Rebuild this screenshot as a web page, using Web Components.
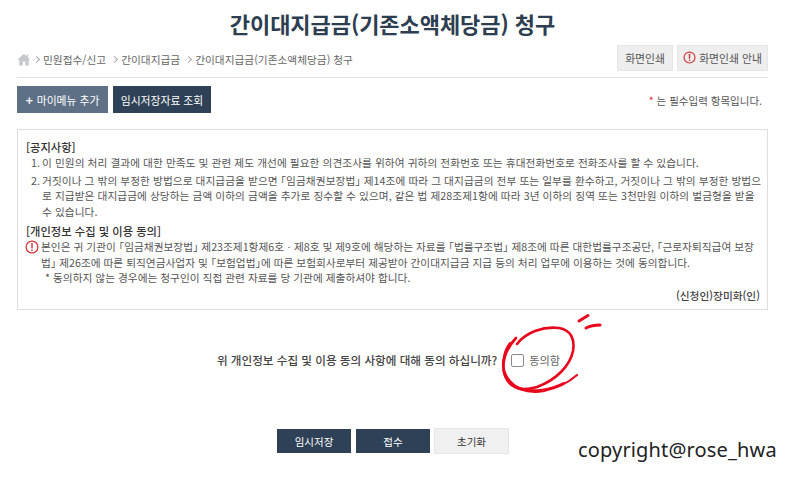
<!DOCTYPE html>
<html lang="ko">
<head>
<meta charset="utf-8">
<title>간이대지급금 청구</title>
<style>
  html, body { margin: 0; padding: 0; background: #fff; }
  body { width: 800px; height: 480px; overflow: hidden; position: relative; font-family: "Noto Sans CJK KR", "Noto Sans", sans-serif; color: #444; }
</style>
</head>
<body>
<claim-page>
  <page-title>간이대지급금(기존소액체당금) 청구</page-title>
  <page-location></page-location>
  <page-toolbar></page-toolbar>
  <notice-box></notice-box>
  <consent-row></consent-row>
  <form-actions></form-actions>
</claim-page>
<red-scribble></red-scribble>
<copy-mark>copyright@rose_hwa</copy-mark>

<script>
const alertIcon = (size) => `<svg width="${size}" height="${size}" viewBox="0 0 14 14" style="flex:none;display:block">
  <circle cx="7" cy="7" r="5.9" fill="none" stroke="#d13a3a" stroke-width="1.3"/>
  <path d="M7 3.6V7.8" stroke="#d13a3a" stroke-width="1.5" stroke-linecap="round"/>
  <circle cx="7" cy="10" r=".85" fill="#d13a3a"/>
</svg>`;

// brackets in the CJK font are full width, the reference has them narrow
const law = (name) => `<i>「</i>${name}<i>」</i>`;

class ClaimPage extends HTMLElement {
  constructor() {
    super();
    this.attachShadow({ mode: "open" });
    this.shadowRoot.innerHTML = `
      <style>
        :host { display: flex; flex-direction: column; width: 751px; margin-left: 17px; }
      </style>
      <slot></slot>`;
  }
}
customElements.define("claim-page", ClaimPage);

class PageTitle extends HTMLElement {
  constructor() {
    super();
    this.attachShadow({ mode: "open" });
    this.shadowRoot.innerHTML = `
      <style>
        :host { display: block; height: 43px; padding-top: 7px; box-sizing: border-box; text-align: center;
          font-size: 22px; font-weight: 700; line-height: 32px; color: #2c3e50; letter-spacing: -.05px; white-space: nowrap; }
      </style>
      <slot></slot>`;
  }
}
customElements.define("page-title", PageTitle);

class PageLocation extends HTMLElement {
  constructor() {
    super();
    this.attachShadow({ mode: "open" });
    this.shadowRoot.innerHTML = `
      <style>
        :host { display: flex; align-items: center; justify-content: space-between; height: 35px; box-sizing: border-box;
          border-bottom: 1px solid #e2e2e2; padding-bottom: 5px; }
        .crumbs { display: flex; align-items: center; font-size: 10.7px; color: #666; white-space: nowrap; padding-top: 3px; }
        .sep { width: 4px; height: 4px; border-top: 1px solid #aaa; border-right: 1px solid #aaa; transform: rotate(45deg); margin: 0 4px 0 6px; }
        .btns { display: flex; gap: 4px; }
        button { all: unset; display: flex; align-items: center; justify-content: center; gap: 3px; height: 26px; box-sizing: border-box;
          background: #eeeeee; border: 1px solid #e6e6e6; font-size: 10.8px; color: #555; white-space: nowrap; }
        .b1 { width: 56px; }
        .b2 { width: 91px; }
      </style>
      <div class="crumbs">
        <svg width="14" height="13" viewBox="0 0 14 13"><path d="M7 .8 .4 6.8h1.9V12.4h3.4V8.6h2.6v3.8h3.4V6.8h1.9L11.2 4.9V1.6H9.6v1.8z" fill="#c4c8cc"/></svg>
        <span class="sep" style="margin-left:3px"></span><span>민원접수/신고</span>
        <span class="sep"></span><span>간이대지급금</span>
        <span class="sep"></span><span>간이대지급금(기존소액체당금) 청구</span>
      </div>
      <div class="btns">
        <button class="b1">화면인쇄</button>
        <button class="b2">${alertIcon(13)}<span>화면인쇄 안내</span></button>
      </div>`;
  }
}
customElements.define("page-location", PageLocation);

class PageToolbar extends HTMLElement {
  constructor() {
    super();
    this.attachShadow({ mode: "open" });
    this.shadowRoot.innerHTML = `
      <style>
        :host { display: flex; align-items: flex-start; justify-content: space-between; height: 51px; box-sizing: border-box; padding-top: 8px; }
        .btns { display: flex; gap: 5px; }
        button { all: unset; display: flex; align-items: center; justify-content: center; height: 27px; box-sizing: border-box;
          color: #fff; font-size: 10.8px; white-space: nowrap; }
        .menu { width: 91px; background: #5d7086; gap: 4px; }
        .menu b { font-size: 12px; line-height: 1; }
        .temp { width: 98px; background: #2f4156; }
        .req { font-size: 10.5px; line-height: 27px; margin-top: 1px; color: #555; padding-right: 6px; white-space: nowrap; }
        .req i { font-style: normal; color: #e0303a; }
      </style>
      <div class="btns">
        <button class="menu"><b>+</b><span>마이메뉴 추가</span></button>
        <button class="temp">임시저장자료 조회</button>
      </div>
      <div class="req"><i>*</i> 는 필수입력 항목입니다.</div>`;
  }
}
customElements.define("page-toolbar", PageToolbar);

class NoticeBox extends HTMLElement {
  constructor() {
    super();
    this.attachShadow({ mode: "open" });
    this.shadowRoot.innerHTML = `
      <style>
        :host { display: block; height: 181px; box-sizing: border-box; border: 1px solid #dedede; padding: 9px 7px 0 8px;
          font-size: 10.7px; line-height: 15.5px; color: #555; white-space: nowrap; }
        h4 { margin: 0; font-size: 11.3px; font-weight: 500; color: #333; line-height: 16px; }
        h4.second { margin-top: 4px; }
        .item { display: flex; padding-left: 5px; margin-bottom: 2px; letter-spacing: .05px; }
        .item span:first-child { width: 11px; flex: none; }
        .agree { display: flex; }
        .agree svg { margin: 1px 2px 0 -1px; }
        .sub { padding-left: 19px; }
        .sign { text-align: right; color: #444; font-weight: 500; margin-top: 2px; }
        i { font-style: normal; font-feature-settings: "halt"; }
      </style>
      <h4>[공지사항]</h4>
      <div class="item"><span>1.</span><span>이 민원의 처리 결과에 대한 만족도 및 관련 제도 개선에 필요한 의견조사를 위하여 귀하의 전화번호 또는 휴대전화번호로 전화조사를 할 수 있습니다.</span></div>
      <div class="item"><span>2.</span><span>거짓이나 그 밖의 부정한 방법으로 대지급금을 받으면 ${law("임금채권보장법")} 제14조에 따라 그 대지급금의 전부 또는 일부를 환수하고, 거짓이나 그 밖의 부정한 방법으<br>로 지급받은 대지급금에 상당하는 금액 이하의 금액을 추가로 징수할 수 있으며, 같은 법 제28조제1항에 따라 3년 이하의 징역 또는 3천만원 이하의 벌금형을 받을<br>수 있습니다.</span></div>
      <h4 class="second">[개인정보 수집 및 이용 동의]</h4>
      <div class="agree">${alertIcon(14)}<span>본인은 귀 기관이 ${law("임금채권보장법")} 제23조제1항제6호ㆍ제8호 및 제9호에 해당하는 자료를 ${law("법률구조법")} 제8조에 따른 대한법률구조공단, ${law("근로자퇴직급여 보장<br>법")} 제26조에 따른 퇴직연금사업자 및 ${law("보험업법")}에 따른 보험회사로부터 제공받아 간이대지급금 지급 등의 처리 업무에 이용하는 것에 동의합니다.</span></div>
      <div class="sub">* 동의하지 않는 경우에는 청구인이 직접 관련 자료를 당 기관에 제출하셔야 합니다.</div>
      <div class="sign">(신청인)장미화(인)</div>`;
  }
}
customElements.define("notice-box", NoticeBox);

class ConsentRow extends HTMLElement {
  constructor() {
    super();
    this.attachShadow({ mode: "open" });
    this.shadowRoot.innerHTML = `
      <style>
        :host { display: flex; align-items: center; justify-content: center; height: 100px; box-sizing: border-box; padding-right: 8px;
          font-size: 11.6px; color: #444; white-space: nowrap; }
        b { font-weight: 500; }
        .box { width: 13px; height: 13px; border: 1px solid #8a8a8a; border-radius: 2px; margin: 0 5px 0 14px; box-sizing: border-box; }
        span { font-size: 11.2px; color: #666; }
      </style>
      <b>위 개인정보 수집 및 이용 동의 사항에 대해 동의 하십니까?</b><div class="box"></div><span>동의함</span>`;
  }
}
customElements.define("consent-row", ConsentRow);

class FormActions extends HTMLElement {
  constructor() {
    super();
    this.attachShadow({ mode: "open" });
    this.shadowRoot.innerHTML = `
      <style>
        :host { display: flex; justify-content: center; align-items: flex-start; gap: 5px; padding: 19px 0 0 1px; }
        button { all: unset; display: flex; align-items: center; justify-content: center; width: 74px; height: 24px;
          background: #2f4156; color: #fff; font-size: 10.5px; }
        .reset { background: #f0f0f0; color: #333; border: 1px solid #e6e6e6; box-sizing: border-box; width: 75px; height: 26px; margin: -1px 0 0 -1px; }
      </style>
      <button>임시저장</button><button>접수</button><button class="reset">초기화</button>`;
  }
}
customElements.define("form-actions", FormActions);

class RedScribble extends HTMLElement {
  constructor() {
    super();
    this.attachShadow({ mode: "open" });
    this.shadowRoot.innerHTML = `
      <style>
        :host { position: absolute; left: 490px; top: 305px; width: 120px; height: 110px; display: block; pointer-events: none; }
      </style>
      <svg width="120" height="110" viewBox="0 0 120 110" fill="none" stroke="#e8071d" stroke-linecap="round">
        <path d="M27 39C36 27 54 21 69 23C81 25 85 34 83 46C80 61 66 75 47 82C33 86 21 84 16 73C11 62 13 47 26 33" stroke-width="2.6"/>
        <path d="M20 38C13 47 11 62 15 71C21 84 38 89 54 86C68 83 78 78 87 70" stroke-width="2.1"/>
        <path d="M13 58C13 68 20 80 32 84C44 87 60 85 74 78" stroke-width="2"/>
        <path d="M89 16 98 10.5" stroke-width="3"/>
        <path d="M96 23C100 21 106 20 110 20" stroke-width="3"/>
      </svg>`;
  }
}
customElements.define("red-scribble", RedScribble);

class CopyMark extends HTMLElement {
  constructor() {
    super();
    this.attachShadow({ mode: "open" });
    this.shadowRoot.innerHTML = `
      <style>
        :host { position: absolute; left: 578px; top: 436px; display: block; font-family: "Noto Sans", sans-serif; font-size: 20px; line-height: 28px; letter-spacing: .15px; color: #222; white-space: nowrap; }
      </style>
      <slot></slot>`;
  }
}
customElements.define("copy-mark", CopyMark);
</script>
</body>
</html>
